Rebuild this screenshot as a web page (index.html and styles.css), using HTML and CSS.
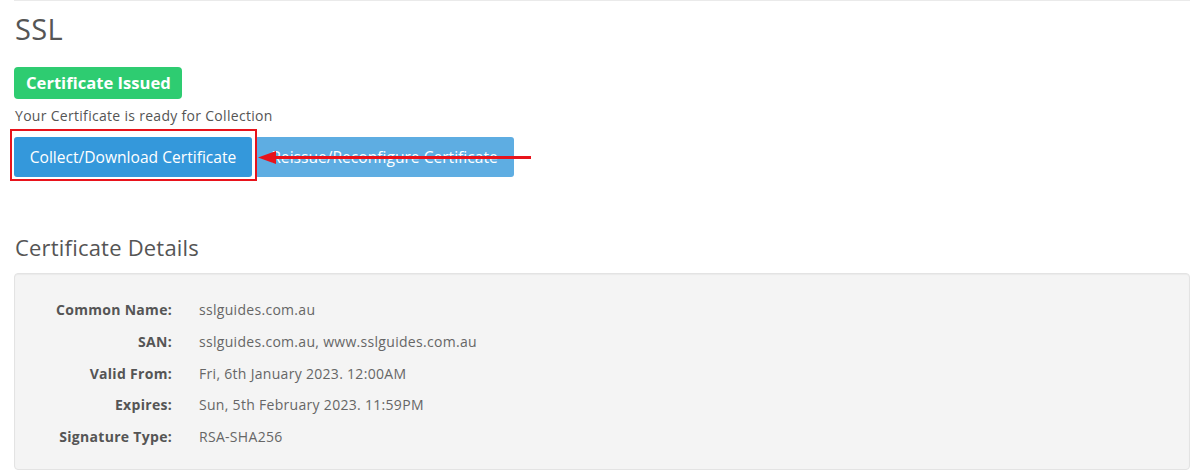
FILE: index.html
```html
<!DOCTYPE html>
<html lang="en">
<head>
<meta charset="utf-8">
<title>SSL</title>
<link rel="stylesheet" href="styles.css">
</head>
<body>
<div class="page">
  <h1 class="title">SSL</h1>
  <div class="status"><span class="badge">Certificate Issued</span></div>
  <p class="note">Your Certificate is ready for Collection</p>
  <div class="actions">
    <span class="highlight-wrap">
      <button class="btn btn-primary">Collect/Download Certificate</button>
      <span class="highlight"></span>
    </span>
    <button class="btn btn-light">Reissue/Reconfigure Certificate</button>
    <svg class="arrow" width="276" height="15" viewBox="0 0 276 15" aria-hidden="true">
      <line x1="16" y1="7.5" x2="273" y2="7.5" stroke="#e8131b" stroke-width="3"/>
      <polygon points="0,7.5 18,1 18,14" fill="#e8131b"/>
    </svg>
  </div>
  <h2 class="subtitle">Certificate Details</h2>
  <div class="panel">
    <dl class="details">
      <dt>Common Name:</dt><dd>sslguides.com.au</dd>
      <dt>SAN:</dt><dd>sslguides.com.au, www.sslguides.com.au</dd>
      <dt>Valid From:</dt><dd>Fri, 6th January 2023. 12:00AM</dd>
      <dt>Expires:</dt><dd>Sun, 5th February 2023. 11:59PM</dd>
      <dt>Signature Type:</dt><dd>RSA-SHA256</dd>
    </dl>
  </div>
</div>
</body>
</html>
```

FILE: styles.css
```css
* { box-sizing: border-box; }
html, body { margin: 0; padding: 0; background: #fff; }
body {
  font-family: "Open Sans", "Liberation Sans", sans-serif;
  font-size: 14px;
  letter-spacing: 0.3px;
  color: #555;
}
.page {
  width: 1176px;
  margin-left: 14px;
  border-top: 1px solid #eaeaea;
}
.title {
  margin: 10px 0 0 1px;
  font-size: 29px;
  line-height: 35px;
  font-weight: 400;
  letter-spacing: 0.4px;
  color: #555;
}
.status {
  display: flex;
  margin-top: 21px;
}
.badge {
  display: block;
  background: #2ecc71;
  color: #fff;
  font-weight: 700;
  font-size: 16.6px;
  letter-spacing: 0;
  line-height: 22px;
  padding: 5px 12px;
  border-radius: 4px;
  width: 168px;
  white-space: nowrap;
}
.note {
  margin: 7px 0 0 1px;
  line-height: 20px;
  color: #555;
}
.actions {
  position: relative;
  display: flex;
  gap: 3px;
  margin-top: 11px;
}
.highlight-wrap { position: relative; display: flex; }
.btn {
  font-family: inherit;
  font-size: 15.6px;
  letter-spacing: 0;
  line-height: 22px;
  height: 40px;
  padding: 9px 0;
  border: 0;
  border-radius: 3px;
  color: #fff;
  white-space: nowrap;
  text-align: center;
  cursor: pointer;
}
.btn-primary { background: #3498db; width: 238px; }
.btn-light { background: #5eade2; width: 259px; }
.highlight {
  position: absolute;
  left: -4px;
  top: -8px;
  right: -5px;
  bottom: -4px;
  border: 2px solid #e8131b;
  pointer-events: none;
}
.arrow {
  position: absolute;
  left: 244px;
  top: 13px;
}
.subtitle {
  margin: 57px 0 0 1px;
  font-size: 22px;
  line-height: 26px;
  font-weight: 400;
  letter-spacing: 0.2px;
  color: #555;
}
.panel {
  margin-top: 13px;
  background: #f4f4f4;
  border: 1px solid #e3e3e3;
  border-radius: 4px;
  box-shadow: inset 0 1px 1px rgba(0,0,0,0.04);
  padding: 26px 0 22px;
}
.details {
  display: grid;
  grid-template-columns: 157px 1fr;
  column-gap: 27px;
  row-gap: 11.75px;
  margin: 0;
  line-height: 20px;
}
.details dt {
  text-align: right;
  font-weight: 700;
  color: #555;
}
.details dd {
  margin: 0;
  color: #666;
}
```
